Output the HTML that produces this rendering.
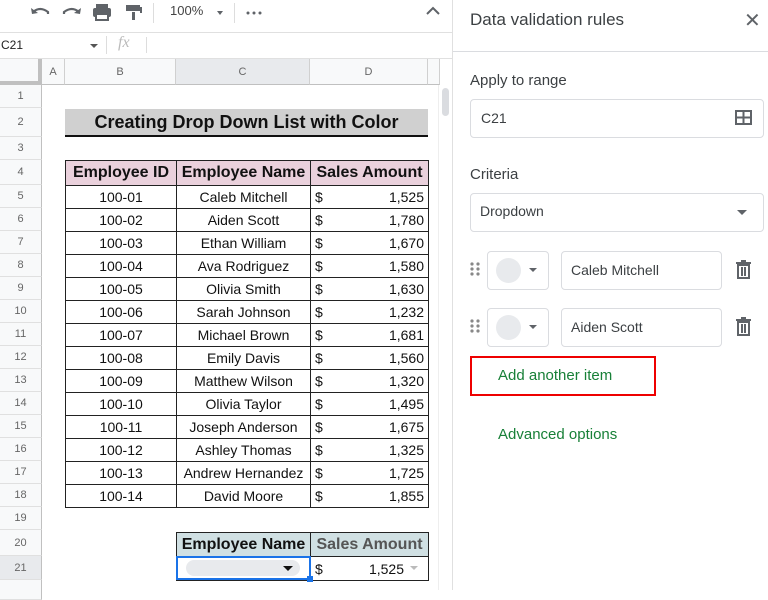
<!DOCTYPE html>
<html><head><meta charset="utf-8"><style>
*{box-sizing:border-box;margin:0;padding:0}
body{width:768px;height:590px;overflow:hidden;background:#fff;font-family:"Liberation Sans",Arial,sans-serif;position:relative}
.a{position:absolute}
.rh{position:absolute;left:0;width:42px;background:#f8f9fa;border-bottom:1px solid #e0e0e0;border-right:1px solid #c0c0c0;color:#666;font-size:11px;display:flex;align-items:center;justify-content:center}
.ch{position:absolute;top:59px;height:26px;background:#f8f9fa;border-right:1px solid #d0d0d0;border-bottom:1px solid #c0c0c0;color:#666;font-size:11px;display:flex;align-items:center;justify-content:center}
table{border-collapse:collapse;position:absolute;font-size:14px;color:#111;table-layout:fixed}
td{border:1px solid #222;text-align:center;padding:0 4px;white-space:nowrap;overflow:hidden}
th{border:1px solid #222;font-weight:bold;font-size:16px;background:#ead1dc;padding:0;white-space:nowrap;overflow:hidden}
.d{text-align:right}
.d span{float:left}
.lbl{position:absolute;left:470px;font-size:15px;color:#3c4043}
.box{position:absolute;border:1px solid #dadce0;border-radius:4px;background:#fff}
</style></head><body>
<div class="a" style="left:0;top:0;width:452px;height:32px;background:#fff"></div>
<svg class="a" style="left:28px;top:3px" width="240" height="20" viewBox="0 0 240 20">
<path d="M5 9 Q12 3 20 9 L20 11" stroke="#5f6368" stroke-width="2.2" fill="none"/><path d="M3 5 L4 11 L10 10" fill="#5f6368"/>
<path d="M51 9 Q44 3 36 9 L36 11" stroke="#5f6368" stroke-width="2.2" fill="none"/><path d="M53 5 L52 11 L46 10" fill="#5f6368"/>
<rect x="65" y="5" width="18" height="9" rx="2" fill="#5f6368"/><rect x="68" y="1" width="12" height="4" fill="#5f6368"/><rect x="68" y="11" width="12" height="6" fill="#fff" stroke="#5f6368" stroke-width="2"/>
<rect x="98" y="2" width="14" height="6" fill="#5f6368"/><rect x="112" y="4" width="2" height="6" fill="#5f6368"/><rect x="104" y="9" width="3" height="8" fill="#5f6368"/>
<rect x="125" y="0" width="1" height="20" fill="#ddd"/><rect x="206" y="0" width="1" height="20" fill="#ddd"/>
<path d="M189 8 L195 8 L192 12Z" fill="#5f6368"/>
<circle cx="220" cy="10" r="1.5" fill="#5f6368"/><circle cx="226" cy="10" r="1.5" fill="#5f6368"/><circle cx="232" cy="10" r="1.5" fill="#5f6368"/>
</svg>
<svg class="a" style="left:425px;top:5px" width="16" height="12"><path d="M2 9 L8 3 L14 9" stroke="#5f6368" stroke-width="2" fill="none"/></svg>
<div class="a" style="left:170px;top:3px;font-size:13px;color:#444">100%</div>
<div class="a" style="left:0;top:32px;width:452px;height:27px;border-top:1px solid #e0e0e0;border-bottom:1px solid #e0e0e0"></div>
<div class="a" style="left:1px;top:38px;font-size:12px;color:#222">C21</div>
<div class="a" style="left:90px;top:44px;border-left:4px solid transparent;border-right:4px solid transparent;border-top:4px solid #555"></div>
<div class="a" style="left:106px;top:36px;width:1px;height:18px;background:#ddd"></div>
<div class="a" style="left:118px;top:34px;font-size:16px;font-style:italic;color:#bbb;font-family:'Liberation Serif',serif">fx</div>
<div class="a" style="left:146px;top:37px;width:1px;height:16px;background:#ddd"></div>
<div class="ch" style="left:0;width:42px;border-right:4px solid #c0c0c0;border-bottom:4px solid #c0c0c0"></div>
<div class="ch" style="left:42px;width:23px">A</div>
<div class="ch" style="left:65px;width:111px">B</div>
<div class="ch" style="left:176px;width:134px;background:#e8eaed">C</div>
<div class="ch" style="left:310px;width:118px">D</div>
<div class="ch" style="left:428px;width:12px"></div>
<div class="rh" style="top:85px;height:23px">1</div>
<div class="rh" style="top:108px;height:29px">2</div>
<div class="rh" style="top:137px;height:23px">3</div>
<div class="rh" style="top:160px;height:25px">4</div>
<div class="rh" style="top:185px;height:23px">5</div>
<div class="rh" style="top:208px;height:23px">6</div>
<div class="rh" style="top:231px;height:23px">7</div>
<div class="rh" style="top:254px;height:23px">8</div>
<div class="rh" style="top:277px;height:23px">9</div>
<div class="rh" style="top:300px;height:23px">10</div>
<div class="rh" style="top:323px;height:23px">11</div>
<div class="rh" style="top:346px;height:23px">12</div>
<div class="rh" style="top:369px;height:23px">13</div>
<div class="rh" style="top:392px;height:23px">14</div>
<div class="rh" style="top:415px;height:23px">15</div>
<div class="rh" style="top:438px;height:23px">16</div>
<div class="rh" style="top:461px;height:23px">17</div>
<div class="rh" style="top:484px;height:23px">18</div>
<div class="rh" style="top:507px;height:23px">19</div>
<div class="rh" style="top:530px;height:26px">20</div>
<div class="rh" style="top:556px;height:24px;background:#e8eaed">21</div>
<div class="rh" style="top:580px;height:20px"></div>
<div class="a" style="left:438px;top:85px;width:14px;height:505px;background:#fff;border-left:1px solid #eee"></div>
<div class="a" style="left:442px;top:88px;width:7px;height:28px;border-radius:4px;background:#dadce0"></div>
<div class="a" style="left:65px;top:109px;width:363px;height:28px;background:#d0d0d0;border-bottom:2px solid #111;font-weight:bold;font-size:18px;text-align:center;line-height:27px;color:#111">Creating Drop Down List with Color</div>
<table style="left:65px;top:160px;width:363px">
<colgroup><col style="width:111px"><col style="width:134px"><col style="width:118px"></colgroup>
<tr style="height:25px"><th>Employee ID</th><th>Employee Name</th><th>Sales Amount</th></tr>
<tr style="height:23px"><td>100-01</td><td>Caleb Mitchell</td><td class="d"><span>$</span>1,525</td></tr>
<tr style="height:23px"><td>100-02</td><td>Aiden Scott</td><td class="d"><span>$</span>1,780</td></tr>
<tr style="height:23px"><td>100-03</td><td>Ethan William</td><td class="d"><span>$</span>1,670</td></tr>
<tr style="height:23px"><td>100-04</td><td>Ava Rodriguez</td><td class="d"><span>$</span>1,580</td></tr>
<tr style="height:23px"><td>100-05</td><td>Olivia Smith</td><td class="d"><span>$</span>1,630</td></tr>
<tr style="height:23px"><td>100-06</td><td>Sarah Johnson</td><td class="d"><span>$</span>1,232</td></tr>
<tr style="height:23px"><td>100-07</td><td>Michael Brown</td><td class="d"><span>$</span>1,681</td></tr>
<tr style="height:23px"><td>100-08</td><td>Emily Davis</td><td class="d"><span>$</span>1,560</td></tr>
<tr style="height:23px"><td>100-09</td><td>Matthew Wilson</td><td class="d"><span>$</span>1,320</td></tr>
<tr style="height:23px"><td>100-10</td><td>Olivia Taylor</td><td class="d"><span>$</span>1,495</td></tr>
<tr style="height:23px"><td>100-11</td><td>Joseph Anderson</td><td class="d"><span>$</span>1,675</td></tr>
<tr style="height:23px"><td>100-12</td><td>Ashley Thomas</td><td class="d"><span>$</span>1,325</td></tr>
<tr style="height:23px"><td>100-13</td><td>Andrew Hernandez</td><td class="d"><span>$</span>1,725</td></tr>
<tr style="height:23px"><td>100-14</td><td>David Moore</td><td class="d"><span>$</span>1,855</td></tr>
</table>
<table style="left:176px;top:532px;width:252px">
<colgroup><col style="width:134px"><col style="width:118px"></colgroup>
<tr style="height:24px"><th style="background:#d0e0e3">Employee Name</th><th style="background:#d0e0e3;color:#555">Sales Amount</th></tr>
<tr style="height:24px"><td></td><td class="d" style="padding-right:24px"><span>$</span>1,525</td></tr>
</table>
<div class="a" style="left:176px;top:556px;width:135px;height:24px;border:2px solid #1a73e8"></div>
<div class="a" style="left:186px;top:560px;width:114px;height:16px;border-radius:8px;background:#e8eaed"></div>
<div class="a" style="left:283px;top:566px;border-left:5px solid transparent;border-right:5px solid transparent;border-top:5px solid #111"></div>
<div class="a" style="left:307px;top:576px;width:6px;height:6px;background:#1a73e8"></div>
<div class="a" style="left:410px;top:566px;border-left:4px solid transparent;border-right:4px solid transparent;border-top:4px solid #bbb"></div>
<div class="a" style="left:452px;top:0;width:316px;height:590px;background:#fff;border-left:1px solid #e0e0e0"></div>
<div class="a" style="left:470px;top:10px;font-size:17px;color:#3c4043">Data validation rules</div>
<div class="a" style="left:744px;top:8px;font-size:20px;color:#5f6368">✕</div>
<div class="a" style="left:453px;top:51px;width:315px;height:1px;background:#dadce0"></div>
<div class="lbl" style="top:72px">Apply to range</div>
<div class="box" style="left:470px;top:99px;width:294px;height:39px"></div>
<div class="a" style="left:481px;top:110px;font-size:14px;color:#3c4043">C21</div>
<svg class="a" style="left:735px;top:110px" width="17" height="15"><rect x="1" y="1" width="15" height="13" fill="none" stroke="#5f6368" stroke-width="2"/><path d="M8.5 1V14M1 7.5H16" stroke="#5f6368" stroke-width="2"/></svg>
<div class="lbl" style="top:166px">Criteria</div>
<div class="box" style="left:470px;top:193px;width:294px;height:39px"></div>
<div class="a" style="left:480px;top:203px;font-size:14px;color:#3c4043">Dropdown</div>
<div class="a" style="left:737px;top:210px;border-left:5px solid transparent;border-right:5px solid transparent;border-top:5px solid #5f6368"></div>
<svg class="a" style="left:469px;top:261px" width="12" height="16"><g fill="#888"><circle cx="3" cy="3" r="1.6"/><circle cx="9" cy="3" r="1.6"/><circle cx="3" cy="8" r="1.6"/><circle cx="9" cy="8" r="1.6"/><circle cx="3" cy="13" r="1.6"/><circle cx="9" cy="13" r="1.6"/></g></svg>
<div class="box" style="left:487px;top:251px;width:62px;height:39px"></div>
<div class="a" style="left:496px;top:258px;width:25px;height:25px;border-radius:50%;background:#e8eaed"></div>
<div class="a" style="left:529px;top:268px;border-left:4px solid transparent;border-right:4px solid transparent;border-top:4px solid #5f6368"></div>
<div class="box" style="left:561px;top:251px;width:161px;height:39px"></div>
<div class="a" style="left:571px;top:262px;font-size:14px;color:#3c4043">Caleb Mitchell</div>
<svg class="a" style="left:735px;top:260px" width="17" height="20"><path d="M1 3H16M6 1H11" stroke="#5f6368" stroke-width="2"/><rect x="3" y="5" width="11" height="13" fill="none" stroke="#5f6368" stroke-width="2"/><path d="M7 7V16M10 7V16" stroke="#5f6368" stroke-width="2"/></svg>
<svg class="a" style="left:469px;top:318px" width="12" height="16"><g fill="#888"><circle cx="3" cy="3" r="1.6"/><circle cx="9" cy="3" r="1.6"/><circle cx="3" cy="8" r="1.6"/><circle cx="9" cy="8" r="1.6"/><circle cx="3" cy="13" r="1.6"/><circle cx="9" cy="13" r="1.6"/></g></svg>
<div class="box" style="left:487px;top:308px;width:62px;height:39px"></div>
<div class="a" style="left:496px;top:315px;width:25px;height:25px;border-radius:50%;background:#e8eaed"></div>
<div class="a" style="left:529px;top:325px;border-left:4px solid transparent;border-right:4px solid transparent;border-top:4px solid #5f6368"></div>
<div class="box" style="left:561px;top:308px;width:161px;height:39px"></div>
<div class="a" style="left:571px;top:319px;font-size:14px;color:#3c4043">Aiden Scott</div>
<svg class="a" style="left:735px;top:317px" width="17" height="20"><path d="M1 3H16M6 1H11" stroke="#5f6368" stroke-width="2"/><rect x="3" y="5" width="11" height="13" fill="none" stroke="#5f6368" stroke-width="2"/><path d="M7 7V16M10 7V16" stroke="#5f6368" stroke-width="2"/></svg>
<div class="a" style="left:470px;top:356px;width:186px;height:40px;border:2px solid #e00"></div>
<div class="a" style="left:498px;top:367px;font-size:15px;color:#188038">Add another item</div>
<div class="a" style="left:498px;top:426px;font-size:15px;color:#188038">Advanced options</div>
</body></html>
